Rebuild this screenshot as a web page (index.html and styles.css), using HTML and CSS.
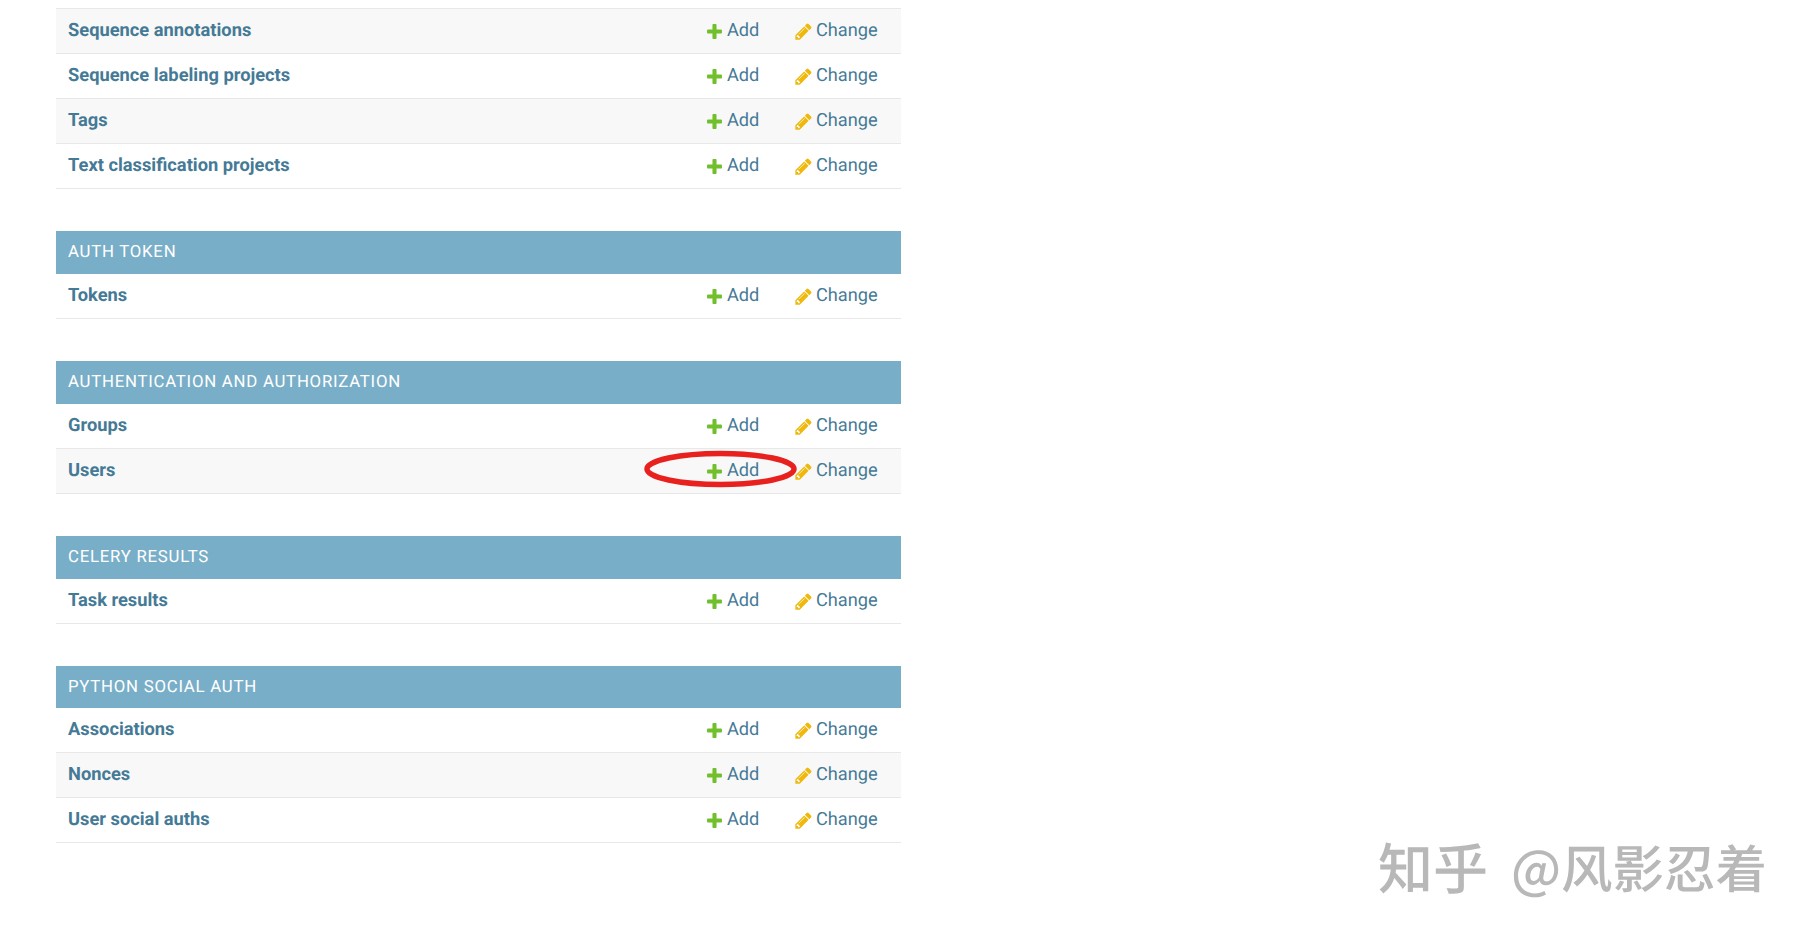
FILE: index.html
```html
<!DOCTYPE html>
<html lang="zh">

<head>
    <meta charset="UTF-8">
    <title>Site administration</title>
    <link rel="stylesheet" href="styles.css">
</head>

<body>
    <svg width="0" height="0" class="defs">
        <symbol id="icon-add" viewBox="0 0 1792 1792">
            <path d="M1600 796v192q0 40-28 68t-68 28h-416v416q0 40-28 68t-68 28h-192q-40 0-68-28t-28-68v-416h-416q-40 0-68-28t-28-68v-192q0-40 28-68t68-28h416v-416q0-40 28-68t68-28h192q40 0 68 28t28 68v416h416q40 0 68 28t28 68z" />
        </symbol>
        <symbol id="icon-change" viewBox="0 0 1792 1792">
            <path d="M491 1536l91-91-235-235-91 91v107h128v128h107zm523-928q0-22-22-22-10 0-17 7l-542 542q-7 7-7 17 0 22 22 22 10 0 17-7l542-542q7-7 7-17zm-54-192l416 416-832 832h-416v-416zm683 96q0 53-37 90l-166 166-416-416 166-165q36-38 90-38 53 0 91 38l235 234q37 39 37 91z" />
        </symbol>
    </svg>

    <div class="content">
        <div class="module first">
            <div class="row shaded"><a class="name">Sequence annotations</a><a class="add"><svg class="icon"><use href="#icon-add" /></svg>Add</a><a class="change"><svg class="icon"><use href="#icon-change" /></svg>Change</a></div>
            <div class="row"><a class="name">Sequence labeling projects</a><a class="add"><svg class="icon"><use href="#icon-add" /></svg>Add</a><a class="change"><svg class="icon"><use href="#icon-change" /></svg>Change</a></div>
            <div class="row shaded"><a class="name">Tags</a><a class="add"><svg class="icon"><use href="#icon-add" /></svg>Add</a><a class="change"><svg class="icon"><use href="#icon-change" /></svg>Change</a></div>
            <div class="row"><a class="name">Text classification projects</a><a class="add"><svg class="icon"><use href="#icon-add" /></svg>Add</a><a class="change"><svg class="icon"><use href="#icon-change" /></svg>Change</a></div>
        </div>

        <div class="module">
            <div class="caption">Auth Token</div>
            <div class="row"><a class="name">Tokens</a><a class="add"><svg class="icon"><use href="#icon-add" /></svg>Add</a><a class="change"><svg class="icon"><use href="#icon-change" /></svg>Change</a></div>
        </div>

        <div class="module">
            <div class="caption">Authentication and Authorization</div>
            <div class="row"><a class="name">Groups</a><a class="add"><svg class="icon"><use href="#icon-add" /></svg>Add</a><a class="change"><svg class="icon"><use href="#icon-change" /></svg>Change</a></div>
            <div class="row shaded"><a class="name">Users</a><a class="add"><svg class="icon"><use href="#icon-add" /></svg>Add</a><a class="change"><svg class="icon"><use href="#icon-change" /></svg>Change</a></div>
        </div>

        <div class="module">
            <div class="caption">Celery Results</div>
            <div class="row"><a class="name">Task results</a><a class="add"><svg class="icon"><use href="#icon-add" /></svg>Add</a><a class="change"><svg class="icon"><use href="#icon-change" /></svg>Change</a></div>
        </div>

        <div class="module last">
            <div class="caption">Python Social Auth</div>
            <div class="row"><a class="name">Associations</a><a class="add"><svg class="icon"><use href="#icon-add" /></svg>Add</a><a class="change"><svg class="icon"><use href="#icon-change" /></svg>Change</a></div>
            <div class="row shaded"><a class="name">Nonces</a><a class="add"><svg class="icon"><use href="#icon-add" /></svg>Add</a><a class="change"><svg class="icon"><use href="#icon-change" /></svg>Change</a></div>
            <div class="row"><a class="name">User social auths</a><a class="add"><svg class="icon"><use href="#icon-add" /></svg>Add</a><a class="change"><svg class="icon"><use href="#icon-change" /></svg>Change</a></div>
        </div>
    </div>

    <svg class="ellipse" viewBox="0 0 156 40">
        <ellipse cx="77.5" cy="20" rx="73.5" ry="15.5" />
    </svg>
    <div class="watermark">
        <span class="wm-brand">知乎</span>
        <span class="wm-user">@风影忍着</span>
    </div>
</body>

</html>
```

FILE: styles.css
```css
body {
    margin: 0;
    height: 940px;
    overflow: hidden;
    background: #fff;
    font-family: Roboto, "Liberation Sans", sans-serif;
    font-size: 18.2px;
    color: #457a96;
    text-rendering: geometricPrecision;
}

.defs {
    position: absolute;
}

.content {
    width: 845px;
    margin-left: 56px;
    padding-top: 8px;
}

.module {
    margin-bottom: 42px;
}

.first {
    border-top: 1px solid #e8e8e8;
}

.caption {
    height: 43px;
    line-height: 43px;
    padding-left: 12px;
    background: #79aec8;
    color: #fff;
    font-size: 16.8px;
    letter-spacing: 0.75px;
    text-transform: uppercase;
}

.last .caption {
    height: 42px;
    line-height: 42px;
}

.row {
    display: flex;
    align-items: center;
    box-sizing: border-box;
    height: 45px;
    padding-bottom: 1px;
    border-bottom: 1px solid #e8e8e8;
}

.shaded {
    background: #f8f8f8;
}

.name {
    flex: 1;
    padding-left: 12px;
    font-size: 18.3px;
    font-weight: 700;
}

.add {
    display: flex;
    align-items: center;
    width: 89px;
}

.change {
    display: flex;
    align-items: center;
    width: 107px;
}

.icon {
    width: 19px;
    height: 19px;
    margin-top: 1px;
    margin-right: 3px;
}

.add .icon {
    fill: #70bf2b;
}

.change .icon {
    fill: #efb80b;
}

.ellipse {
    position: absolute;
    left: 643px;
    top: 449px;
    width: 156px;
    height: 40px;
}

.ellipse ellipse {
    fill: none;
    stroke: #e8201e;
    stroke-width: 5.5;
}

.watermark {
    position: absolute;
    left: 1378px;
    top: 830px;
    display: flex;
    align-items: center;
    gap: 23px;
    height: 70px;
    font-family: "Noto Sans CJK SC", sans-serif;
    font-weight: 500;
    white-space: nowrap;
    color: #b8b8b8;
}

.wm-brand {
    font-size: 55px;
}

.wm-user {
    font-size: 51.5px;
}
```
